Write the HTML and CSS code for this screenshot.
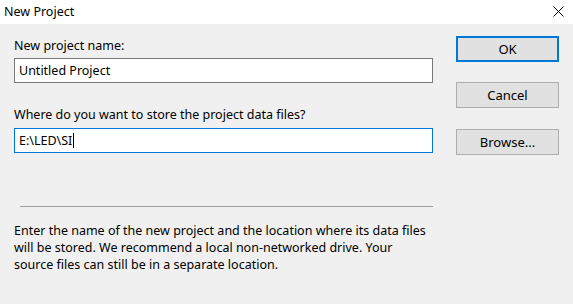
FILE: index.html
```html
<!DOCTYPE html>
<html>
<head>
<meta charset="utf-8">
<link rel="stylesheet" href="styles.css">
</head>
<body>
<div class="dialog">
  <div class="titlebar">
    <span class="title">New Project</span>
    <svg class="close" width="11" height="11" viewBox="0 0 11 11"><path d="M0.5 0.5 L10.5 10.5 M10.5 0.5 L0.5 10.5" stroke="#000" stroke-width="1" fill="none"/></svg>
  </div>
  <div class="body">
    <div class="main">
      <label class="label first">New project name:</label>
      <div class="input">Untitled Project</div>
      <label class="label second">Where do you want to store the project data files?</label>
      <div class="input focused">E:\LED\SI<span class="caret"></span></div>
      <div class="sep"></div>
      <p class="help">Enter the name of the new project and the location where its data files will be stored. We recommend a local non-networked drive. Your source files can still be in a separate location.</p>
    </div>
    <div class="buttons">
      <button class="btn default">OK</button>
      <button class="btn cancel">Cancel</button>
      <button class="btn browse">Browse...</button>
    </div>
  </div>
</div>
</body>
</html>
```
FILE: styles.css
```css
html, body {
  margin: 0;
  padding: 0;
}
body {
  width: 573px;
  height: 304px;
  overflow: hidden;
  background: #f0f0f0;
  font-family: "Noto Sans", "Open Sans", sans-serif;
  font-size: 12.5px;
  color: #000;
}
.dialog {
  display: flex;
  flex-direction: column;
  height: 304px;
}
.titlebar {
  height: 24px;
  background: #fff;
  display: flex;
  align-items: center;
  justify-content: space-between;
  padding: 0 9px 0 4px;
}
.title {
  line-height: 16px;
  margin-top: -1px;
}
.close {
  display: block;
  margin-top: -2px;
}
.body {
  flex: 1;
  display: flex;
  padding: 0 14px 0 14px;
}
.main {
  width: 419px;
  display: flex;
  flex-direction: column;
}
.label {
  display: block;
  line-height: 16px;
}
.label.first {
  margin-top: 14px;
  margin-bottom: 4px;
}
.label.second {
  margin-top: 24px;
  margin-bottom: 5px;
}
.input {
  height: 25px;
  box-sizing: border-box;
  border: 1px solid #7a7a7a;
  background: #fff;
  padding: 0 4px;
  line-height: 23px;
  display: flex;
  align-items: center;
}
.input.focused {
  border-color: #0078d7;
}
.caret {
  display: inline-block;
  width: 1px;
  height: 15px;
  background: #000;
  margin-left: 1px;
}
.sep {
  margin-top: 53px;
  margin-left: 6px;
  height: 1px;
  background: #a0a0a0;
}
.help {
  margin: 15px 0 0 0;
  line-height: 17px;
  width: 419px;
}
.buttons {
  margin-left: 23px;
  display: flex;
  flex-direction: column;
  padding-top: 12px;
}
.btn {
  width: 103px;
  height: 26px;
  box-sizing: border-box;
  background: #e1e1e1;
  border: 1px solid #adadad;
  font-family: inherit;
  font-size: 13px;
  color: #000;
  padding: 0;
  margin: 0;
}
.btn.default {
  border: 2px solid #0078d7;
}
.cancel {
  margin-top: 20px;
}
.browse {
  margin-top: 21px;
}
```
